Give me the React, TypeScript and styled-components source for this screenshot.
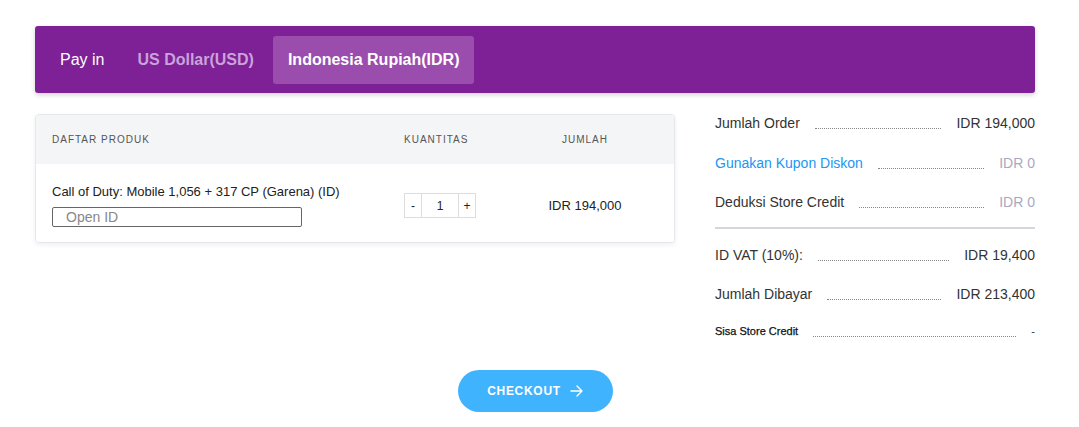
import React from "react";
import styled, { createGlobalStyle } from "styled-components";

const Global = createGlobalStyle`
  html, body { margin: 0; padding: 0; background: #fff; }
  body { font-family: "Liberation Sans", Arial, sans-serif; color: #333; }
  * { box-sizing: border-box; }
`;

const Page = styled.div`
  width: 1000px;
  margin-left: 35px;
  padding-top: 26px;
`;

const PayBar = styled.div`
  height: 67px;
  background: #7e2096;
  border-radius: 3px;
  box-shadow: 0 2px 5px rgba(0, 0, 0, 0.18);
  display: flex;
  align-items: center;
  padding: 10px 10px 9px 25px;
  gap: 4px;
`;

const PayLabel = styled.span`
  color: #fff;
  font-size: 16px;
  margin-right: 14px;
`;

const Tab = styled.button<{ $active?: boolean }>`
  height: 48px;
  padding: 0 15px;
  border: none;
  border-radius: 3px;
  font-family: inherit;
  font-size: 16px;
  font-weight: bold;
  cursor: pointer;
  background: ${(p) => (p.$active ? "#9a4dad" : "transparent")};
  color: ${(p) => (p.$active ? "#fff" : "#c9a3da")};
`;

const Main = styled.div`
  display: flex;
  gap: 40px;
  margin-top: 21px;
  align-items: flex-start;
`;

const Card = styled.div`
  width: 640px;
  border: 1px solid #e6e7ec;
  border-radius: 4px;
  background: #fff;
  box-shadow: 0 2px 5px rgba(30, 30, 80, 0.07);
  overflow: hidden;
`;

const Grid = styled.div<{ $head?: boolean }>`
  display: grid;
  grid-template-columns: 352px 108px 146px;
  align-items: center;
  padding: ${(p) => (p.$head ? "0 16px" : "20px 16px 15px")};
  height: ${(p) => (p.$head ? "49px" : "auto")};
  background: ${(p) => (p.$head ? "#f4f5f7" : "#fff")};
`;

const HeadCell = styled.div<{ $center?: boolean }>`
  font-size: 10px;
  letter-spacing: 1px;
  color: #555;
  text-transform: uppercase;
  text-align: ${(p) => (p.$center ? "center" : "left")};
`;

const ProductName = styled.div`
  font-size: 13px;
  line-height: 16px;
  color: #222;
`;

const IdInput = styled.input`
  display: block;
  margin-top: 7px;
  width: 250px;
  height: 20px;
  border: 1px solid #666;
  border-radius: 2px;
  padding: 0 13px;
  font-family: inherit;
  font-size: 14px;
  color: #333;
  outline: none;
  &::placeholder { color: #888; }
`;

const Qty = styled.div`
  display: inline-flex;
  border: 1px solid #ddd;
  height: 25px;
  width: 72px;
  font-size: 12px;
  color: #222;
`;

const QtyBtn = styled.span`
  width: 16px;
  display: flex;
  align-items: center;
  justify-content: center;
  font-size: 12px;
`;

const QtyVal = styled.span`
  flex: 1;
  display: flex;
  align-items: center;
  justify-content: center;
  border-left: 1px solid #ddd;
  border-right: 1px solid #ddd;
`;

const Amount = styled.div`
  font-size: 13px;
  text-align: center;
  color: #222;
`;

const Summary = styled.div`
  width: 320px;
  margin-top: -1px;
`;

const Row = styled.div<{ $small?: boolean }>`
  display: flex;
  align-items: stretch;
  height: ${(p) => (p.$small ? "14px" : "20px")};
  line-height: ${(p) => (p.$small ? "14px" : "20px")};
  font-size: ${(p) => (p.$small ? "11px" : "14px")};
  color: #333;
  margin-bottom: ${(p) => (p.$small ? "0" : "19.5px")};
`;

const RowLabel = styled.span<{ $link?: boolean; $strong?: boolean }>`
  color: ${(p) => (p.$link ? "#2196f3" : p.$strong ? "#111" : "#333")};
  white-space: nowrap;
  -webkit-text-stroke: ${(p) => (p.$strong ? "0.25px #111" : "0")};
`;

const Dots = styled.span<{ $small?: boolean }>`
  flex: 1;
  align-self: flex-end;
  margin: ${(p) => (p.$small ? "0 15px 1px 15px" : "0 15px 4px 15px")};
  border-bottom: 1px dotted #888;
  height: 1px;
`;

const RowValue = styled.span<{ $muted?: boolean }>`
  color: ${(p) => (p.$muted ? "#a8a9c0" : "#333")};
  white-space: nowrap;
`;

const Divider = styled.div`
  height: 2px;
  background: #d4d6de;
  margin: -5px 0 16px;
`;

const Footer = styled.div`
  display: flex;
  justify-content: center;
  margin-top: 32px;
`;

const Checkout = styled.button`
  width: 155px;
  height: 42px;
  border: none;
  border-radius: 21px;
  background: #40b3ff;
  color: #fff;
  font-family: inherit;
  font-size: 12px;
  font-weight: bold;
  letter-spacing: 0.7px;
  display: flex;
  align-items: center;
  justify-content: center;
  gap: 9px;
  cursor: pointer;
  padding-left: 6px;
`;

const Arrow = () => (
  <svg width="13" height="12" viewBox="0 0 13 12" fill="none" stroke="#fff" strokeWidth="1.4" strokeLinecap="round" strokeLinejoin="round">
    <path d="M1 6h11M7 1l5 5-5 5" />
  </svg>
);

export default function App() {
  return (
    <>
      <Global />
      <Page>
        <PayBar>
          <PayLabel>Pay in</PayLabel>
          <Tab>US Dollar(USD)</Tab>
          <Tab $active>Indonesia Rupiah(IDR)</Tab>
        </PayBar>
        <Main>
          <Card>
            <Grid $head>
              <HeadCell>Daftar Produk</HeadCell>
              <HeadCell>Kuantitas</HeadCell>
              <HeadCell $center>Jumlah</HeadCell>
            </Grid>
            <Grid>
              <div>
                <ProductName>Call of Duty: Mobile 1,056 + 317 CP (Garena) (ID)</ProductName>
                <IdInput placeholder="Open ID" />
              </div>
              <div>
                <Qty>
                  <QtyBtn>-</QtyBtn>
                  <QtyVal>1</QtyVal>
                  <QtyBtn>+</QtyBtn>
                </Qty>
              </div>
              <Amount>IDR 194,000</Amount>
            </Grid>
          </Card>
          <Summary>
            <Row>
              <RowLabel>Jumlah Order</RowLabel>
              <Dots />
              <RowValue>IDR 194,000</RowValue>
            </Row>
            <Row>
              <RowLabel $link>Gunakan Kupon Diskon</RowLabel>
              <Dots />
              <RowValue $muted>IDR 0</RowValue>
            </Row>
            <Row>
              <RowLabel>Deduksi Store Credit</RowLabel>
              <Dots />
              <RowValue $muted>IDR 0</RowValue>
            </Row>
            <Divider />
            <Row>
              <RowLabel>ID VAT (10%):</RowLabel>
              <Dots />
              <RowValue>IDR 19,400</RowValue>
            </Row>
            <Row>
              <RowLabel>Jumlah Dibayar</RowLabel>
              <Dots />
              <RowValue>IDR 213,400</RowValue>
            </Row>
            <Row $small>
              <RowLabel $strong>Sisa Store Credit</RowLabel>
              <Dots $small />
              <RowValue>-</RowValue>
            </Row>
          </Summary>
        </Main>
        <Footer>
          <Checkout>
            CHECKOUT <Arrow />
          </Checkout>
        </Footer>
      </Page>
    </>
  );
}
